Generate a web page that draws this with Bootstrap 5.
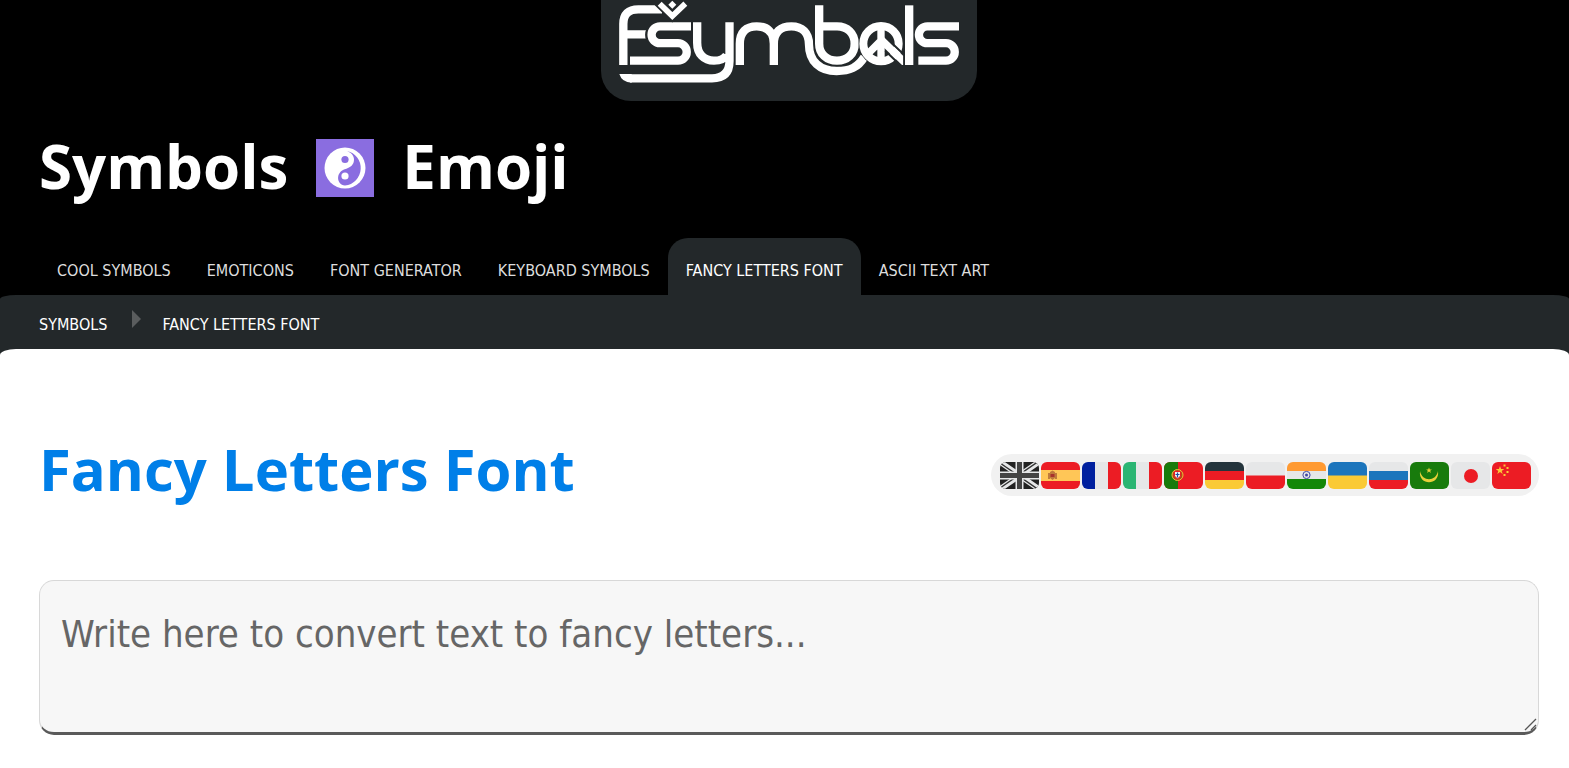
<!DOCTYPE html>
<html lang="en">
<head>
<meta charset="utf-8">
<meta name="viewport" content="width=device-width, initial-scale=1">
<title>Fancy Letters Font</title>
<link rel="stylesheet" href="https://cdn.jsdelivr.net/npm/bootstrap@5.3.0/dist/css/bootstrap.min.css">
<style>
  :root { --slate: #23282a; }
  body { font-family: Tahoma, "DejaVu Sans Condensed", "Noto Sans", sans-serif; background: #fff; }
  .gutter { padding-left: 39px; padding-right: 30px; }
  .logo-box { background: var(--slate); border-radius: 0 0 30px 30px; }
  .display-title { font-family: "Open Sans", sans-serif; font-weight: 700; font-size: 60px; line-height: 78px; }
  .site-title { gap: 28px; padding-top: 26px; padding-bottom: 33px; }
  .site-title svg { margin-top: 4px; }
  .page-title { color: #007fe8; font-size: 58px; }
  .tab-link { font-size: 16px; line-height: 24px; padding: 21px 18px 12px; color: #ddd; text-decoration: none; text-transform: uppercase; }
  .tab-link.active { background: var(--slate); color: #fff; border-radius: 20px 20px 0 0; }
  .crumb-wrap { background: #000; }
  .crumb-bar { background: var(--slate); border-radius: 16px 16px 0 0 / 4px 4px 0 0; font-size: 16px; line-height: 24px; }
  .crumb-list { padding-top: 18px; padding-bottom: 12px; }
  .crumb-list a { color: #fff; text-decoration: none; text-transform: uppercase; }
  .crumb-arrow { margin: -3px 20px 0 24px; }
  .sheet-wrap { background: var(--slate); }
  .sheet { background: #fff; border-radius: 16px 16px 0 0 / 6px 6px 0 0; padding-top: 81px; }
  .flag-pill { background: #f1f1f1; border-radius: 21px; padding: 8px 8px 7px 9px; gap: 2px; margin-top: 12px; }
  .flag-pill svg { display: block; border-radius: 6px; }
  .fancy-input { height: 155px; padding: 25px 21px; font-size: 38px; line-height: 56px; background: #f7f7f7; border: 1px solid #d8d8d8; border-bottom: 3px solid #5a5a5a; border-radius: 15px; margin-top: 72px; }
  .fancy-input:focus { background: #f7f7f7; }
  .fancy-input::placeholder { color: #666; opacity: 1; }
  .fancy-input::-webkit-resizer { background: url("data:image/svg+xml,%3Csvg xmlns='http://www.w3.org/2000/svg' width='15' height='15'%3E%3Cpath d='M2 13L13 2M8 13L13 8' stroke='%23555' stroke-width='1.3'/%3E%3C/svg%3E") no-repeat right bottom; }
</style>
</head>
<body>
<header class="bg-black text-white">
  <div class="gutter">
    <div class="d-flex justify-content-center">
      <a href="#" class="logo-box d-block" aria-label="FSymbols">
        <svg class="d-block" width="376" height="101" viewBox="33 0 1128 303" fill="none" stroke="#fff" stroke-width="25">
          <path d="M100 195V72Q100 28 145 28H216M100 103H172"/>
          <path stroke="#23282a" stroke-width="35" d="M304 79H208a25 25 0 0 0 0 50.500H264a26 26 0 0 1 0 52.500H120"/>
          <path d="M303 79H210a25 25 0 0 0 0 50.500H264a26 26 0 0 1 0 52.500H120"/>
          <path stroke="#23282a" stroke-width="28" d="M204 6L247 48 292 6"/>
          <path stroke-width="17" d="M209 11L247 48 286 11"/>
          <path fill="#fff" stroke="none" d="M247 2l12 12-12 12-12-12z"/>
          <path d="M321.500 67V128C321.500 162 342 182 372 182Q400 182 410 165M418.500 67V184Q418 235 366 235H120"/>
          <path fill="#fff" stroke="none" d="M88 222H125V248Q96 248 88 222z"/>
          <path d="M449.500 195V131C449.500 96 468 79 500 79S551.500 96 551.500 131V195M551.500 131C551.500 96 572 79 604 79S657 98 657 134C657 184 690 213 740 213C780 213 804 202 823 171"/>
          <path stroke="#23282a" stroke-width="33" d="M687.500 67V131C687.500 162 710 182 741 182S794 162 794 131"/>
          <path d="M687.500 16V131C687.500 162 710 182 741 182S794 162 794 131 772 79 741 79H690"/>
          <circle cx="873" cy="131" r="67" fill="#23282a" stroke="none"/>
          <circle cx="873" cy="131" r="53" stroke-width="24"/>
          <path stroke-width="22" d="M873 75V187M873 122L832 163"/>
          <path stroke="#23282a" stroke-width="6" d="M906 130L942 164M886 152L934 199"/>
          <path fill="#fff" stroke="none" d="M873 103L940 168V195H936L868 130z"/>
          <path stroke="#23282a" stroke-width="4" d="M942 60V200"/>
          <path d="M957.500 16V195"/>
          <path d="M1107 79H1012a25 25 0 0 0 0 50.500H1068a26 26 0 0 1 0 52.500H985"/>
        </svg>
      </a>
    </div>
    <div class="site-title display-title d-flex align-items-center">
      <span>Symbols</span>
      <svg width="58" height="58" viewBox="0 0 58 58" role="img" aria-label="Yin yang">
        <path fill="#8a6de0" d="M0 0h58v58H0z"/>
        <circle cx="29" cy="29" r="20.500" fill="#fff"/>
        <path fill="#8a6de0" d="M31 12a17.500 17.500 0 0 1-2 34.500c-9-1-9-13-1-16 7-2 10-5 10-10 0-4-3-7-7-8.500z"/>
        <circle cx="29" cy="20.500" r="8" fill="#fff"/>
        <circle cx="29" cy="20.500" r="3.600" fill="#8a6de0"/>
        <circle cx="29" cy="37" r="3.600" fill="#fff"/>
      </svg>
      <span>Emoji</span>
    </div>
    <nav class="d-flex flex-wrap" aria-label="Main">
      <a class="tab-link" href="#">Cool Symbols</a>
      <a class="tab-link" href="#">Emoticons</a>
      <a class="tab-link" href="#">Font Generator</a>
      <a class="tab-link" href="#">Keyboard Symbols</a>
      <a class="tab-link active" href="#" aria-current="page">Fancy Letters Font</a>
      <a class="tab-link" href="#">ASCII Text Art</a>
    </nav>
  </div>
</header>
<div class="crumb-wrap">
  <nav class="crumb-bar gutter" aria-label="Breadcrumb">
    <div class="crumb-list d-flex align-items-start">
      <a href="#">Symbols</a>
      <svg class="crumb-arrow" width="11" height="18" viewBox="0 0 11 18" aria-hidden="true"><path fill="#5a5d5e" d="M1 0l9 9-9 9z"/></svg>
      <a href="#">Fancy Letters Font</a>
    </div>
  </nav>
</div>
<div class="sheet-wrap">
  <main class="sheet gutter">
    <div class="d-flex flex-wrap align-items-center justify-content-between">
      <h1 class="page-title display-title mb-0">Fancy Letters Font</h1>
      <nav class="flag-pill d-flex" aria-label="Languages">
        <a href="#" aria-label="English"><svg width="39" height="27" viewBox="0 0 39 27"><path fill="#222" d="M0 0h39v27H0z"/><path stroke="#e6e7e8" stroke-width="5.500" d="M0 0l39 27M39 0L0 27"/><path stroke="#333" stroke-width="1.400" d="M0 1l39 27M39-1L0 26"/><path stroke="#e6e7e8" stroke-width="8" d="M19.500 0v27M0 13.500h39"/><path stroke="#444" stroke-width="5" d="M19.500 0v27M0 13.500h39"/></svg></a>
        <a href="#" aria-label="Spanish"><svg width="39" height="27" viewBox="0 0 39 27"><path fill="#ec1c24" d="M0 0h39v27H0z"/><path fill="#ffc657" d="M0 8h39v11H0z"/><path fill="#c07a3c" d="M7 11h2v6H7zM14 11h2v6h-2zM9 10l2.500-1.500L14 10v6l-2.500 2L9 16z"/><path fill="#a8322c" d="M9.500 12h4v3h-4z"/></svg></a>
        <a href="#" aria-label="French"><svg width="39" height="27" viewBox="0 0 39 27"><path fill="#e6e7e8" d="M0 0h39v27H0z"/><path fill="#00209f" d="M0 0h13v27H0z"/><path fill="#ec1c24" d="M26 0h13v27H26z"/></svg></a>
        <a href="#" aria-label="Italian"><svg width="39" height="27" viewBox="0 0 39 27"><path fill="#e6e7e8" d="M0 0h39v27H0z"/><path fill="#2bb573" d="M0 0h13v27H0z"/><path fill="#ec1c24" d="M26 0h13v27H26z"/></svg></a>
        <a href="#" aria-label="Portuguese"><svg width="39" height="27" viewBox="0 0 39 27"><path fill="#ec1c24" d="M0 0h39v27H0z"/><path fill="#187b0c" d="M0 0h14v27H0z"/><circle cx="13.500" cy="13" r="5.500" fill="#b7451b" stroke="#e8c33a"/><path fill="#f4f4f4" stroke="#ec1c24" d="M10.500 9.500h6v4.500l-3 3-3-3z"/><path stroke="#1d4fa0" stroke-width="1.200" d="M13.500 10.500v5M11.500 12.500h4"/></svg></a>
        <a href="#" aria-label="German"><svg width="39" height="27" viewBox="0 0 39 27"><path fill="#24343c" d="M0 0h39v9H0z"/><path fill="#ec1c24" d="M0 9h39v9H0z"/><path fill="#faca36" d="M0 18h39v9H0z"/></svg></a>
        <a href="#" aria-label="Polish"><svg width="39" height="27" viewBox="0 0 39 27"><path fill="#e6e7e8" d="M0 0h39v14H0z"/><path fill="#ec1c24" d="M0 13.500h39V27H0z"/></svg></a>
        <a href="#" aria-label="Hindi"><svg width="39" height="27" viewBox="0 0 39 27"><path fill="#e6e7e8" d="M0 0h39v27H0z"/><path fill="#ff9a32" d="M0 0h39v9H0z"/><path fill="#138808" d="M0 17h39v10H0z"/><circle cx="19.500" cy="13" r="3.600" fill="none" stroke="#3f48a5"/><circle cx="19.500" cy="13" r="1.500" fill="#3f48a5"/></svg></a>
        <a href="#" aria-label="Ukrainian"><svg width="39" height="27" viewBox="0 0 39 27"><path fill="#1c75bc" d="M0 0h39v14H0z"/><path fill="#faca36" d="M0 13.500h39V27H0z"/></svg></a>
        <a href="#" aria-label="Russian"><svg width="39" height="27" viewBox="0 0 39 27"><path fill="#e6e7e8" d="M0 0h39v9H0z"/><path fill="#1c75bc" d="M0 9h39v9H0z"/><path fill="#ec1c24" d="M0 18h39v9H0z"/></svg></a>
        <a href="#" aria-label="Arabic"><svg width="39" height="27" viewBox="0 0 39 27"><path fill="#187b0c" d="M0 0h39v27H0z"/><path fill="#e8d03a" d="M10 9c2 11 16 11 18 0 2 15-20 15-18 0zM19 5.500l.8 2h2.100l-1.700 1.300.7 2.100-1.900-1.300-1.900 1.300.7-2.100-1.700-1.300h2.100z"/></svg></a>
        <a href="#" aria-label="Japanese"><svg width="39" height="27" viewBox="0 0 39 27"><path fill="#e6e7e8" d="M0 0h39v27H0z"/><circle cx="20" cy="14" r="7" fill="#ec1c24"/></svg></a>
        <a href="#" aria-label="Chinese"><svg width="39" height="27" viewBox="0 0 39 27"><path fill="#ec1c24" d="M0 0h39v27H0z"/><path fill="#faca36" d="M8 4l1.100 3h3.200L9.700 8.900l1 3.100L8 10.100 5.300 12l1-3.100L3.700 7h3.200zM11.500 2.500h2v2h-2zM14.500 5h2v2h-2zM14.500 9h2v2h-2zM11.500 12h2v2h-2z"/></svg></a>
      </nav>
    </div>
    <textarea class="form-control fancy-input" aria-label="Text to convert" placeholder="Write here to convert text to fancy letters..."></textarea>
  </main>
</div>
<script src="https://cdn.jsdelivr.net/npm/bootstrap@5.3.0/dist/js/bootstrap.bundle.min.js"></script>
</body>
</html>
